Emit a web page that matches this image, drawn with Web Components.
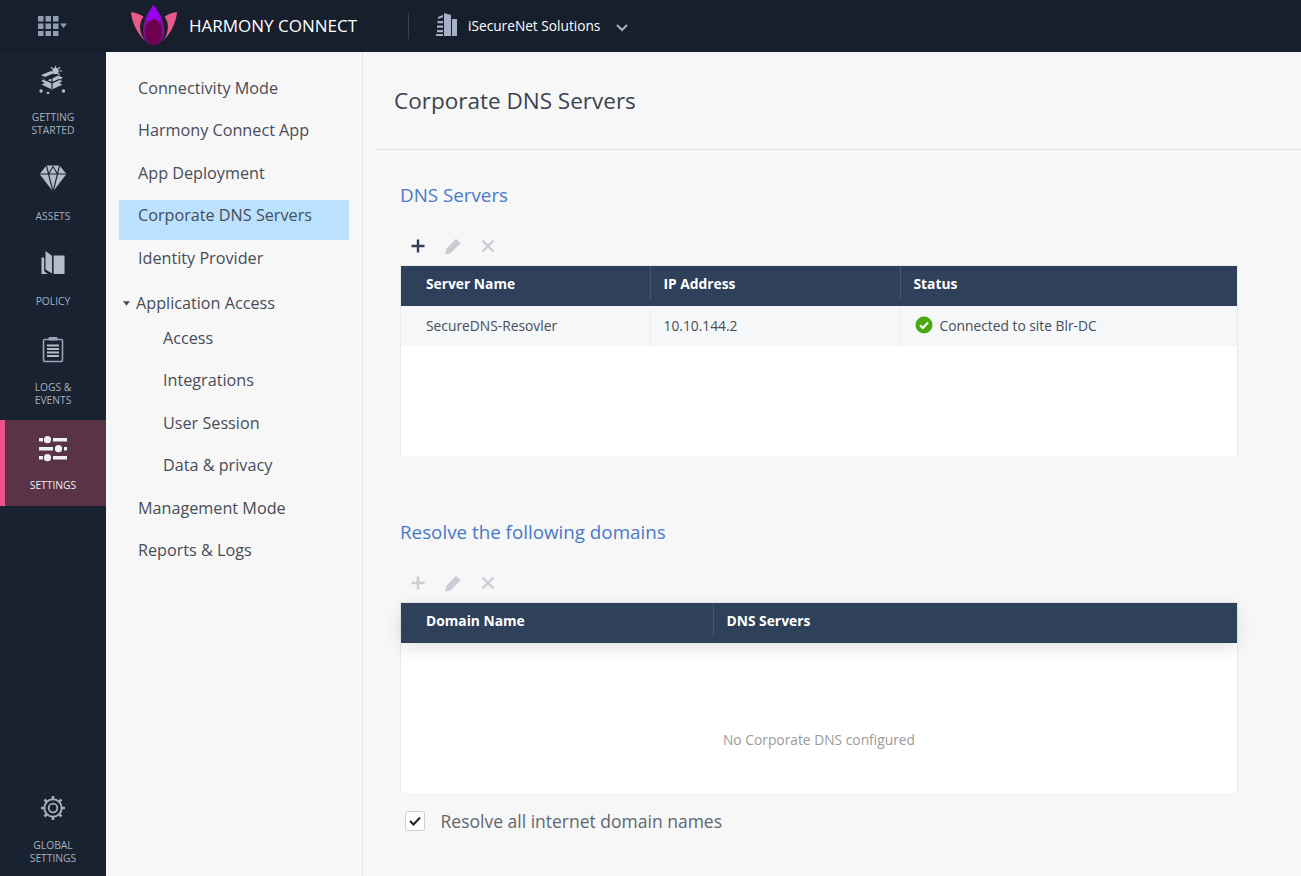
<!doctype html>
<html><head><meta charset="utf-8"><title>Harmony Connect</title>
<style>
html,body{margin:0;height:100%;overflow:hidden}
body{font-family:"Open Sans",sans-serif;background:#f7f7f7}
</style></head><body>
<hc-app>
  <hc-header slot="header" org="iSecureNet Solutions" product="HARMONY CONNECT"></hc-header>
  <hc-rail slot="rail">
    <rail-item icon="start" pad="14" gap="17" tall="112">GETTING<br>STARTED</rail-item>
    <rail-item icon="assets" gap="18" tall="85">ASSETS</rail-item>
    <rail-item icon="policy" gap="18" tall="86">POLICY</rail-item>
    <rail-item icon="logs" gap="18" tall="85">LOGS &amp;<br>EVENTS</rail-item>
    <rail-item icon="settings" active pad="15" gap="16" tall="86">SETTINGS</rail-item>
    <rail-item icon="gear" bottom tall="82">GLOBAL<br>SETTINGS</rail-item>
  </hc-rail>
  <hc-subnav slot="nav">
    <nav-item>Connectivity Mode</nav-item>
    <nav-item>Harmony Connect App</nav-item>
    <nav-item>App Deployment</nav-item>
    <nav-item selected>Corporate DNS Servers</nav-item>
    <nav-item>Identity Provider</nav-item>
    <nav-item group>Application Access</nav-item>
    <nav-item sub>Access</nav-item>
    <nav-item sub>Integrations</nav-item>
    <nav-item sub>User Session</nav-item>
    <nav-item sub>Data &amp; privacy</nav-item>
    <nav-item>Management Mode</nav-item>
    <nav-item>Reports &amp; Logs</nav-item>
  </hc-subnav>
  <page-title>Corporate DNS Servers</page-title>
  <dns-section heading="DNS Servers" add-enabled>
    <dns-table cols="249px 250px 1fr" body="150">
      <t-cell slot="head" first>Server Name</t-cell>
      <t-cell slot="head">IP Address</t-cell>
      <t-cell slot="head">Status</t-cell>
      <t-row>
        <t-cell row first>SecureDNS-Resovler</t-cell>
        <t-cell row>10.10.144.2</t-cell>
        <t-cell row><status-dot></status-dot>Connected to site Blr-DC</t-cell>
      </t-row>
    </dns-table>
  </dns-section>
  <dns-section heading="Resolve the following domains" second>
    <dns-table cols="312px 1fr" body="150" shadow>
      <t-cell slot="head" first>Domain Name</t-cell>
      <t-cell slot="head">DNS Servers</t-cell>
      <empty-note>No Corporate DNS configured</empty-note>
    </dns-table>
  </dns-section>
  <check-row>Resolve all internet domain names</check-row>
</hc-app>
<script>
const ICONS={
start:`<svg width="28" height="28" viewBox="0 0 28 28" fill="#b6becd"><path d="M2 9l10-4 3.500 2L6 11zM2 11.500l4 2L2 15l4 2-3.500 1.500L13 23.500l10.500-5L20 17l3.500-1.800-3-1.500 3.500-2-4.500-2.200-5.500 2.500-1 2-1-1.300-5 2.300z"/><path d="M13 13.600v9.500M6 13.600l7 3.200 7.500-3.400" stroke="#182230" stroke-width="1.200" fill="none"/><circle cx="16.500" cy="5" r="3.200"/><path d="M16.500 0v2M21 1.200l-1.700 1.600M23 5h-2.500M12 1.200L13.700 3M20.500 9l-1.500-1.500" stroke="#b6becd" stroke-width="1.200"/><circle cx="2" cy="25" r="1.700"/><circle cx="9" cy="27" r="1.300"/><circle cx="24.500" cy="25" r="1.700"/></svg>`,
assets:`<svg width="28" height="28" viewBox="0 0 28 28" fill="#b3bccb"><path d="M7.500 1.500h13l7 8.500L14 27.500.5 10z"/><path d="M.5 10h27M7.500 1.500L9.500 10 14 27.500 18.500 10l2-8.500M9.500 10L14 2.500l4.500 7.500" stroke="#182230" stroke-width="1.100" fill="none"/></svg>`,
policy:`<svg width="24" height="24" viewBox="0 0 24 24" fill="#b3bccb"><path d="M.5 6.500h2.700v13.800l3.600 2.700H.5zM4.500 0l6.500 4.800v17.800L4.500 18.600zM12.600 4.500h10.900V23H12.600z"/></svg>`,
logs:`<svg width="22" height="27" viewBox="0 0 22 27"><rect x="1.500" y="3.500" width="19" height="22" rx="1.500" fill="none" stroke="#9aa5b6" stroke-width="1.600"/><path d="M7 4V1.500h8V4z" fill="#9aa5b6" stroke="#9aa5b6"/><path d="M5 9.500h12M5 13h12M5 16.500h12M5 20h12" stroke="#b3bccb" stroke-width="2"/></svg>`,
settings:`<svg width="28" height="26" viewBox="0 0 28 26" fill="#eef0f5"><rect x="0" y="2" width="4" height="3.500"/><circle cx="8.500" cy="3.700" r="3.600"/><rect x="14" y="2" width="14" height="3.500"/><rect x="0" y="11" width="14" height="3.500"/><circle cx="19.500" cy="12.700" r="3.600"/><rect x="25" y="11" width="3" height="3.500"/><rect x="0" y="20" width="4" height="3.500"/><circle cx="8.500" cy="21.700" r="3.600"/><rect x="14" y="20" width="14" height="3.500"/></svg>`,
gear:`<svg width="26" height="26" viewBox="0 0 26 26" fill="none" stroke="#a5aebd"><circle cx="13" cy="13" r="8.700" stroke-width="2"/><circle cx="13" cy="13" r="4.300" stroke-width="1.800"/><path stroke-width="2.600" d="M13 1v3M13 22v3M1 13h3M22 13h3M4.500 4.500l2.200 2.200M19.300 19.300l2.200 2.200M4.500 21.500l2.200-2.200M19.300 6.700l2.200-2.200"/></svg>`
};
function def(name,css,html){
  customElements.define(name,class extends HTMLElement{
    constructor(){super();this.attachShadow({mode:'open'});}
    connectedCallback(){
      const h=typeof html==='function'?html(this):html;
      this.shadowRoot.innerHTML=`<style>${css}</style>${h}`;
    }
  });
}
def('hc-app',`
:host{display:grid;grid-template-columns:106px 257px 1fr;grid-template-rows:52px 824px;width:1301px;height:876px;overflow:hidden}
.h{grid-column:1/4}
main{background:#f7f7f7;min-width:0;overflow:hidden}
`,`<div class="h"><slot name="header"></slot></div><slot name="rail"></slot><slot name="nav"></slot><main><slot></slot></main>`);

def('hc-header',`
:host{display:flex;align-items:center;background:#171f2d;height:52px;color:#fff}
.grid{display:flex;align-items:center;width:131px;padding-left:38px;box-sizing:border-box}
.logo{display:block;width:46px;height:40px;margin-top:-2px}
.prod{font-size:17px;margin-left:12px;margin-top:-2px;width:219px;white-space:nowrap}
.sep{width:1px;height:26px;background:#39424f;margin-right:27px}
.org{font-size:13.700px;margin-left:10px;margin-top:-2px;white-space:nowrap;margin-right:16px}
svg{display:block}
`,el=>`
<div class="grid"><svg width="30" height="20" viewBox="0 0 30 20"><g fill="#8f9db3"><rect x="0" y="0" width="5.500" height="5.500"/><rect x="7.500" y="0" width="5.500" height="5.500"/><rect x="15" y="0" width="5.500" height="5.500"/><rect x="0" y="7.500" width="5.500" height="5.500"/><rect x="7.500" y="7.500" width="5.500" height="5.500"/><rect x="15" y="7.500" width="5.500" height="5.500"/><rect x="0" y="15" width="5.500" height="5.500"/><rect x="7.500" y="15" width="5.500" height="5.500"/><rect x="15" y="15" width="5.500" height="5.500"/><path d="M22 7.500h7l-3.500 4.500z"/></g></svg></div>
<svg class="logo" viewBox="0 0 46 40"><path d="M0 7c5 .6 9 2.300 12.500 4.700-2.500 3-3.700 7-3.300 11.500.3 5 2.300 9.500 5.500 13C7.500 30 1 19 0 7z" fill="#e85a8a"/><path d="M46 7c-5 .6-9 2.300-12.500 4.700 2.500 3 3.700 7 3.300 11.500-.3 5-2.300 9.500-5.500 13C38.500 30 45 19 46 7z" fill="#e85a8a"/><path d="M22.500 0C19 5 12 13 12 26c0 8 5 14 10.500 14S33.500 34 33.500 26C33.500 13 26 5 22.500 0z" fill="#80108f"/><path d="M22.500 0c-2.400 3.500-5.500 8-7.600 14 2.500 3 5.300 4 7.600 4s5.400-1 7.800-4C28.200 8 25 3.500 22.500 0z" fill="#9a00f0"/><path d="M22.500 13.500c-5 2-8.500 7.500-8.500 13.500 0 7 4 13 8.500 13s8.500-6 8.500-13c0-6-3.500-11.500-8.500-13.500z" fill="#6e0050"/></svg>
<div class="prod">${el.getAttribute('product')}</div>
<div class="sep"></div>
<svg width="22" height="23" viewBox="0 0 22 23" fill="#a4b1c5" style="margin-top:-3px"><path d="M8 0l7 2v21H8z"/><path d="M16 6h5v17h-5zM2 4l5-2v2.200L2 6zM1.500 8H7v2.300H1.500zM1 12.500h6v2.300H1zM1 17h6v2.300H1zM0 21h7v2H0z"/></svg>
<div class="org">${el.getAttribute('org')}</div>
<svg width="12" height="8" viewBox="0 0 12 8" style="margin-top:4px" fill="none" stroke="#a4b1c5" stroke-width="2"><path d="M1 1l5 5 5-5"/></svg>
`);

def('hc-rail',`:host{display:flex;flex-direction:column;background:#182230;height:824px}`,`<slot></slot>`);

def('rail-item',`
:host{display:flex;flex-direction:column;align-items:center;box-sizing:border-box;flex:none;width:106px;color:#a7b0be;font-size:10.300px;line-height:13px;text-align:center}
:host([active]){background:#5a3347;border-left:5px solid #ec5487;padding-right:5px;color:#eef0f5}
:host([bottom]){margin-top:auto}
.i{height:28px;display:flex;align-items:center;justify-content:center}
svg{display:block}
`,el=>{
  el.style.height=(el.getAttribute('tall')||85)+'px';
  el.style.paddingTop=(el.getAttribute('pad')||0)+'px';
  return `<div class="i">${ICONS[el.getAttribute('icon')]}</div><div style="margin-top:${el.getAttribute('gap')||17}px"><slot></slot></div>`;
});

def('hc-subnav',`:host{display:flex;flex-direction:column;box-sizing:border-box;background:#f7f7f7;border-right:1px solid #e3e3e3;padding:19.900px 13px 0 13px;height:824px}`,`<slot></slot>`);

def('nav-item',`
:host{display:block;flex:none;box-sizing:border-box;height:40px;margin-bottom:2.500px;padding:0 0 0 19px;font-size:16.200px;line-height:32px;color:#474d58;white-space:nowrap}
:host([selected]){background:#bae1fd;line-height:31px;margin-top:.3px;margin-bottom:2.200px}
:host([sub]){padding-left:44px}
:host([group]){height:34.800px;margin-top:2.500px;margin-bottom:0;padding-left:4px;display:flex;align-items:flex-start}
svg{flex:none;margin:14px 6px 0 0}
`,el=>`${el.hasAttribute('group')?'<svg width="7" height="5" viewBox="0 0 8 5"><path d="M0 0h8L4 5z" fill="#474d58"/></svg>':''}<slot></slot>`);

def('page-title',`
:host{display:block;box-sizing:border-box;height:98px;margin-left:12px;padding:33px 0 0 19px;border-bottom:1px solid #e1e1e1;font-size:22.500px;line-height:32px;color:#3b4350}
`,`<slot></slot>`);

def('dns-section',`
:host{display:block;padding:33px 63px 0 37px}
:host([second]){padding-top:64px}
h2{margin:0;font-weight:400;font-size:18.800px;line-height:24px;color:#4a78c9}
.bar{display:flex;align-items:center;gap:15px;height:39px;margin-top:19px;padding-left:8px}
svg{display:block}
`,el=>{
 const on=el.hasAttribute('add-enabled')?'#2e405a':'#c9ccd4';
 return `<h2>${el.getAttribute('heading')}</h2>
 <div class="bar">
 <svg width="20" height="20" viewBox="0 0 20 20"><path d="M10 3.500v13M3.500 10h13" stroke="${on}" stroke-width="2.400"/></svg>
 <svg width="20" height="20" viewBox="0 0 20 20"><path d="M2 18.500l1.200-5.500L13 2.800l4.700 4.500L7.500 17.300z" fill="#c9ccd4"/></svg>
 <svg width="20" height="20" viewBox="0 0 20 20"><path d="M4.500 4.500l11 11M15.500 4.500l-11 11" stroke="#c9ccd4" stroke-width="2.400"/></svg>
 </div><slot></slot>`;
});

def('dns-table',`
:host{display:block;box-sizing:border-box;width:838px;border:1px solid #e9e9e9;border-bottom:0;background:#fff}
.head{display:grid;height:40px;background:#2e405a;color:#fff;font-weight:700;font-size:13.800px;position:relative}
:host([shadow]) .head{box-shadow:0 5px 16px rgba(0,0,0,.12)}
`,el=>`<div class="head" style="grid-template-columns:${el.getAttribute('cols')}"><slot name="head"></slot></div><div style="height:${el.getAttribute('body')}px"><slot></slot></div>`);

def('t-row',`:host{display:grid;grid-template-columns:249px 250px 1fr;height:40px;background:#f5f7f9;color:#474d58;font-size:13.800px}`,`<slot></slot>`);

def('t-cell',`
:host{display:flex;align-items:center;box-sizing:border-box;height:34px;padding-left:12.500px;border-left:1px solid #45566e;white-space:nowrap}
:host([first]){padding-left:25px;border-left:0}
:host([row]){height:40px;padding-bottom:2px;border-left-color:#eceef1}
`,`<slot></slot>`);

def('status-dot',`:host{display:block;width:18px;height:18px;margin-right:6.500px;margin-top:-1px;margin-left:1.500px}svg{display:block}`,
`<svg width="18" height="18" viewBox="0 0 18 18"><circle cx="9" cy="9" r="8.500" fill="#4aa90f"/><path d="M5 9.300l2.800 2.700L13 6.500" fill="none" stroke="#fff" stroke-width="2"/></svg>`);

def('empty-note',`:host{display:flex;align-items:center;justify-content:center;height:100%;padding-top:43px;box-sizing:border-box;font-size:13.800px;color:#9a9a9a}`,`<slot></slot>`);

def('check-row',`
:host{display:flex;align-items:center;gap:15.500px;margin:18px 0 0 42px;height:20px;font-size:17.500px;color:#5f6670;white-space:nowrap}
.b{box-sizing:border-box;width:20px;height:20px;border:1px solid #cfcfcf;border-radius:3px;background:#fff;display:flex;align-items:center;justify-content:center}
`,`<div class="b"><svg width="12" height="10" viewBox="0 0 12 10"><path d="M1 5l3.500 3.500L11 1.500" fill="none" stroke="#222" stroke-width="2"/></svg></div><slot></slot>`);
</script>
</body></html>
